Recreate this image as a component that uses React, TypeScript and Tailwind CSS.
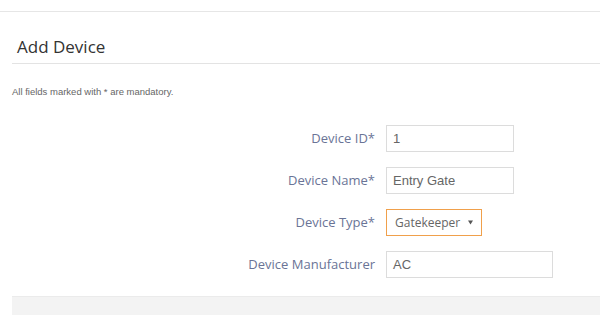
import React from "react";

const label = "w-[363px] shrink-0 text-right text-[13px] text-[#6a7496] font-['Open_Sans',sans-serif]";
const input = "h-[27px] border border-[#dcdcdc] bg-white px-[6px] flex items-center text-[13px] text-[#666] font-['Liberation_Sans',Arial,sans-serif]";

function Row({ name, children }: { name: string; children: React.ReactNode }) {
  return (
    <div className="flex items-center">
      <div className={label}>{name}</div>
      <div className="ml-[11px]">{children}</div>
    </div>
  );
}

export default function App() {
  return (
    <div className="w-[600px] h-[315px] overflow-hidden bg-white font-['Open_Sans',sans-serif]">
      {/* top bar */}
      <div className="h-[12px] border-b border-[#e6e6e6]" />

      <div className="ml-3">
        <div className="h-[52px] border-b border-[#e3e3e3] flex items-end pb-[8px] pl-[5px]">
          <h1 className="text-[17px] leading-none text-[#333]">Add Device</h1>
        </div>

        <p className="mt-[22px] text-[9.5px] leading-[12px] text-[#666] font-['Liberation_Sans',Arial,sans-serif]">
          All fields marked with * are mandatory.
        </p>

        <div className="mt-[27px] flex flex-col gap-[15px]">
          <Row name="Device ID*">
            <div className={`${input} w-[128px]`}>1</div>
          </Row>
          <Row name="Device Name*">
            <div className={`${input} w-[128px]`}>Entry Gate</div>
          </Row>
          <Row name="Device Type*">
            <div className="h-[27px] w-[96px] border border-[#f0a04b] bg-white pl-[8px] pr-[8px] flex items-center justify-between text-[12px] text-[#666]">
              <span>Gatekeeper</span>
              <svg width="5" height="5" viewBox="0 0 5 5"><path d="M0 0.5h5L2.5 4.5z" fill="#555" /></svg>
            </div>
          </Row>
          <Row name="Device Manufacturer">
            <div className={`${input} w-[167px]`}>AC</div>
          </Row>
        </div>

        <div className="mt-[18px] h-[40px] bg-[#f3f3f3] border-t border-[#ebebeb]" />
      </div>
    </div>
  );
}
